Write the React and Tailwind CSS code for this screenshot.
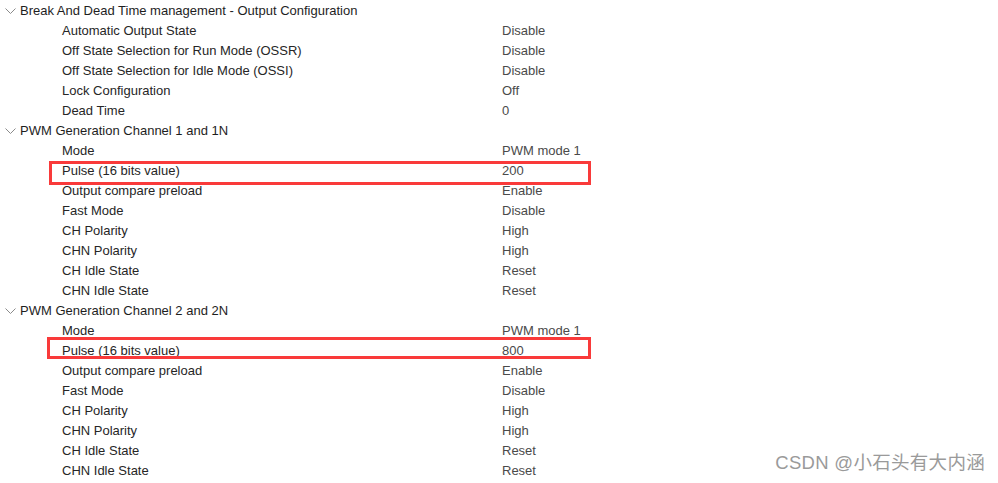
import React from 'react';

const groups = [
  {
    title: 'Break And Dead Time management - Output Configuration',
    rows: [
      ['Automatic Output State', 'Disable'],
      ['Off State Selection for Run Mode (OSSR)', 'Disable'],
      ['Off State Selection for Idle Mode (OSSI)', 'Disable'],
      ['Lock Configuration', 'Off'],
      ['Dead Time', '0'],
    ],
  },
  {
    title: 'PWM Generation Channel 1 and 1N',
    rows: [
      ['Mode', 'PWM mode 1'],
      ['Pulse (16 bits value)', '200'],
      ['Output compare preload', 'Enable'],
      ['Fast Mode', 'Disable'],
      ['CH Polarity', 'High'],
      ['CHN Polarity', 'High'],
      ['CH Idle State', 'Reset'],
      ['CHN Idle State', 'Reset'],
    ],
  },
  {
    title: 'PWM Generation Channel 2 and 2N',
    rows: [
      ['Mode', 'PWM mode 1'],
      ['Pulse (16 bits value)', '800'],
      ['Output compare preload', 'Enable'],
      ['Fast Mode', 'Disable'],
      ['CH Polarity', 'High'],
      ['CHN Polarity', 'High'],
      ['CH Idle State', 'Reset'],
      ['CHN Idle State', 'Reset'],
    ],
  },
];

function Chevron() {
  return (
    <svg className="w-[11px] h-[7px] ml-[5px] mr-[4px]" viewBox="0 0 11 7" fill="none" stroke="#8a8a8a" strokeWidth="1">
      <path d="M0.5 0.5 L5.5 5.5 L10.5 0.5" />
    </svg>
  );
}

export default function App() {
  return (
    <div className="relative w-[998px] h-[483px] bg-white overflow-hidden pt-[1px] text-[13px] leading-[20px]" style={{ fontFamily: '"Liberation Sans", Arial, sans-serif' }}>
      {groups.map((g) => (
        <div key={g.title}>
          <div className="flex items-center h-[20px] text-[#1e1e1e]">
            <Chevron />
            <span>{g.title}</span>
          </div>
          {g.rows.map(([label, value], i) => (
            <div key={i} className="flex h-[20px]">
              <span className="w-[502px] pl-[62px] text-[#262626]">{label}</span>
              <span className="text-[#4a4a4a]">{value}</span>
            </div>
          ))}
        </div>
      ))}

      <div className="absolute left-[49px] top-[161px] w-[542px] h-[24px] border-[3px] border-[#f93a3a]" />
      <div className="absolute left-[47px] top-[337px] w-[544px] h-[22px] border-[3px] border-[#f93a3a]" />

      <div className="absolute right-[13px] top-[453px] text-[18.5px] tracking-[0.3px] text-[#9a9a9a]" style={{ fontFamily: '"Liberation Sans", "Noto Sans CJK SC", sans-serif' }}>
        CSDN @小石头有大内涵
      </div>
    </div>
  );
}
